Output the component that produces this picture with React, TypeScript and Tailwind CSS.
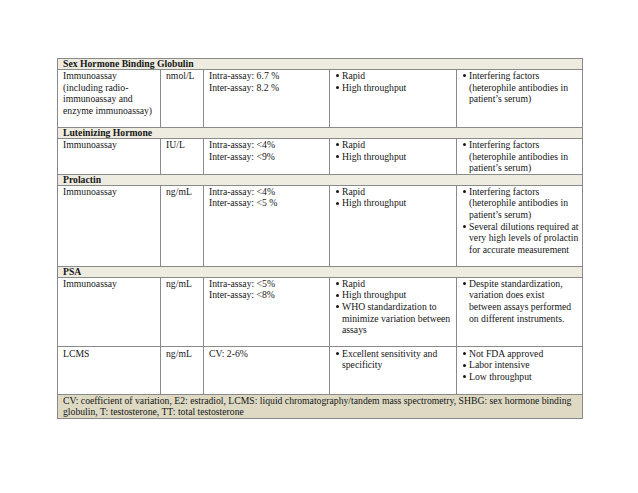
import React from "react";

const B = "border border-[#8a8a8a]";

function Bullets({ items }: { items: React.ReactNode[] }) {
  return (
    <div className="flex flex-col">
      {items.map((it, i) => (
        <div key={i} className="flex">
          <span className="w-[7px] h-[11.6px] shrink-0 flex items-center">
            <span className="block w-[3px] h-[3px] rounded-full bg-[#161616] ml-[1px]" />
          </span>
          <span>{it}</span>
        </div>
      ))}
    </div>
  );
}

function Header({ title, h }: { title: string; h: string }) {
  return (
    <tr className={h}>
      <td colSpan={5} className={`${B} bg-[#eeece1] pl-[5px] p-0 font-bold leading-[10px] align-middle`}>
        {title}
      </td>
    </tr>
  );
}

function Row({
  h,
  pt = "",
  c1,
  c2,
  c3,
  c4,
  c5,
}: {
  h: string;
  pt?: string;
  c1: React.ReactNode;
  c2: React.ReactNode;
  c3: React.ReactNode;
  c4: React.ReactNode[];
  c5: React.ReactNode[];
}) {
  const td = `${B} align-top pl-[5px] pr-[2px] ${pt}`;
  return (
    <tr className={h}>
      <td className={td}>{c1}</td>
      <td className={td}>{c2}</td>
      <td className={`${td} pl-[4px]`}>{c3}</td>
      <td className={`${td} pl-[4px]`}>
        <Bullets items={c4} />
      </td>
      <td className={`${td} pl-[4px]`}>
        <Bullets items={c5} />
      </td>
    </tr>
  );
}

export default function App() {
  return (
    <div className="w-[638px] h-[493px] bg-white pt-[58px] pl-[57px] text-[#161616] font-['Liberation_Serif','Times_New_Roman',serif]">
      <table className="border-collapse w-[525px] table-fixed text-[9.7px] leading-[11.6px] text-[#161616] font-['Liberation_Serif','Times_New_Roman',serif]">
        <colgroup>
          <col className="w-[103px]" />
          <col className="w-[43px]" />
          <col className="w-[126px]" />
          <col className="w-[127px]" />
          <col className="w-[126px]" />
        </colgroup>
        <tbody>
          <Header title="Sex Hormone Binding Globulin" h="h-[11px]" />
          <Row
            h="h-[58px]"
            c1={
              <>
                Immunoassay
                <br />
                (including radio-
                <br />
                immunoassay and
                <br />
                enzyme immunoassay)
              </>
            }
            c2="nmol/L"
            c3={
              <>
                Intra-assay: 6.7 %
                <br />
                Inter-assay: 8.2 %
              </>
            }
            c4={["Rapid", "High throughput"]}
            c5={[
              <>
                Interfering factors
                <br />
                (heterophile antibodies in
                <br />
                patient’s serum)
              </>,
            ]}
          />
          <Header title="Luteinizing Hormone" h="h-[10px]" />
          <Row
            h="h-[35px]"
            c1="Immunoassay"
            c2="IU/L"
            c3={
              <>
                Intra-assay: &lt;4%
                <br />
                Inter-assay: &lt;9%
              </>
            }
            c4={["Rapid", "High throughput"]}
            c5={[
              <>
                Interfering factors
                <br />
                (heterophile antibodies in
                <br />
                patient’s serum)
              </>,
            ]}
          />
          <Header title="Prolactin" h="h-[10px]" />
          <Row
            h="h-[81px]"
            c1="Immunoassay"
            c2="ng/mL"
            c3={
              <>
                Intra-assay: &lt;4%
                <br />
                Inter-assay: &lt;5 %
              </>
            }
            c4={["Rapid", "High throughput"]}
            c5={[
              <>
                Interfering factors
                <br />
                (heterophile antibodies in
                <br />
                patient’s serum)
              </>,
              <>
                Several dilutions required at
                <br />
                very high levels of prolactin
                <br />
                for accurate measurement
              </>,
            ]}
          />
          <Header title="PSA" h="h-[10px]" />
          <Row
            h="h-[69px]"
            c1="Immunoassay"
            c2="ng/mL"
            c3={
              <>
                Intra-assay: &lt;5%
                <br />
                Inter-assay: &lt;8%
              </>
            }
            c4={[
              "Rapid",
              "High throughput",
              <>
                WHO standardization to
                <br />
                minimize variation between
                <br />
                assays
              </>,
            ]}
            c5={[
              <>
                Despite standardization,
                <br />
                variation does exist
                <br />
                between assays performed
                <br />
                on different instruments.
              </>,
            ]}
          />
          <Row
            h="h-[48px]"
            pt="pt-[1px]"
            c1="LCMS"
            c2="ng/mL"
            c3="CV: 2-6%"
            c4={[
              <>
                Excellent sensitivity and
                <br />
                specificity
              </>,
            ]}
            c5={["Not FDA approved", "Labor intensive", "Low throughput"]}
          />
          <tr className="h-[23px]">
            <td colSpan={5} className={`${B} bg-[#ddd9c3] pl-[5px] align-top`}>
              CV: coefficient of variation, E2: estradiol, LCMS: liquid chromatography/tandem mass spectrometry, SHBG: sex hormone binding
              <br />
              globulin, T: testosterone, TT: total testosterone
            </td>
          </tr>
        </tbody>
      </table>
    </div>
  );
}
